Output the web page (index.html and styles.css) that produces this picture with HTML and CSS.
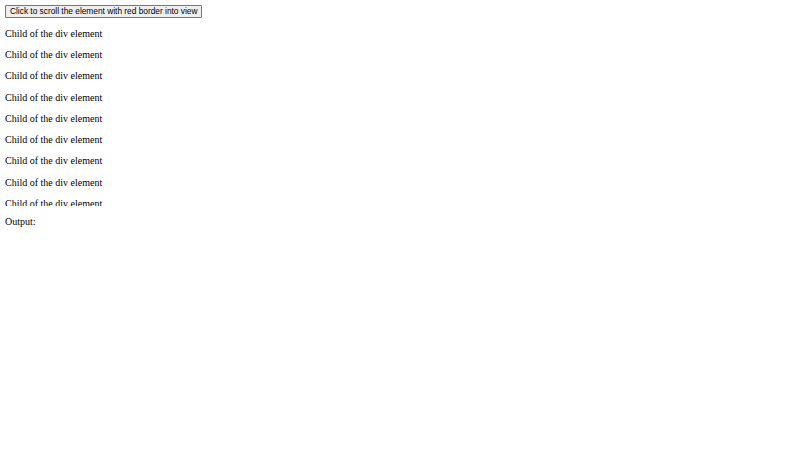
FILE: index.html
```html
<!DOCTYPE html>
<html>
<head>
<meta charset="utf-8">
<link rel="stylesheet" href="styles.css">
</head>
<body>
<div class="bar">
  <button class="btn">Click to scroll the element with red border into view</button>
</div>
<div class="scroller">
  <p>Child of the div element</p>
  <p>Child of the div element</p>
  <p>Child of the div element</p>
  <p>Child of the div element</p>
  <p>Child of the div element</p>
  <p>Child of the div element</p>
  <p>Child of the div element</p>
  <p>Child of the div element</p>
  <p>Child of the div element</p>
  <p>Child of the div element</p>
  <p class="target">Element with red border</p>
  <p>Child of the div element</p>
</div>
<p class="output">Output:</p>
</body>
</html>
```
FILE: styles.css
```css
html, body {
  background: #fff;
}
body {
  margin: 5px;
  font-family: "Liberation Serif", serif;
  font-size: 10px;
  line-height: 11.5px;
  color: #000;
}
.bar {
  display: flex;
  height: 13px;
}
.btn {
  box-sizing: border-box;
  height: 13px;
  font-family: "Liberation Sans", Arial, sans-serif;
  font-size: 8.33px;
  line-height: 9px;
  padding: 0 4px;
  margin: 0;
  border: 1px solid #767676;
  border-radius: 1px;
  background: #efefef;
  color: #000;
}
.scroller {
  height: 188px;
  overflow: hidden;
}
.scroller p {
  margin: 9.75px 0;
}
.target {
  border: 1px solid red;
}
.output {
  margin: 10px 0;
}
```
